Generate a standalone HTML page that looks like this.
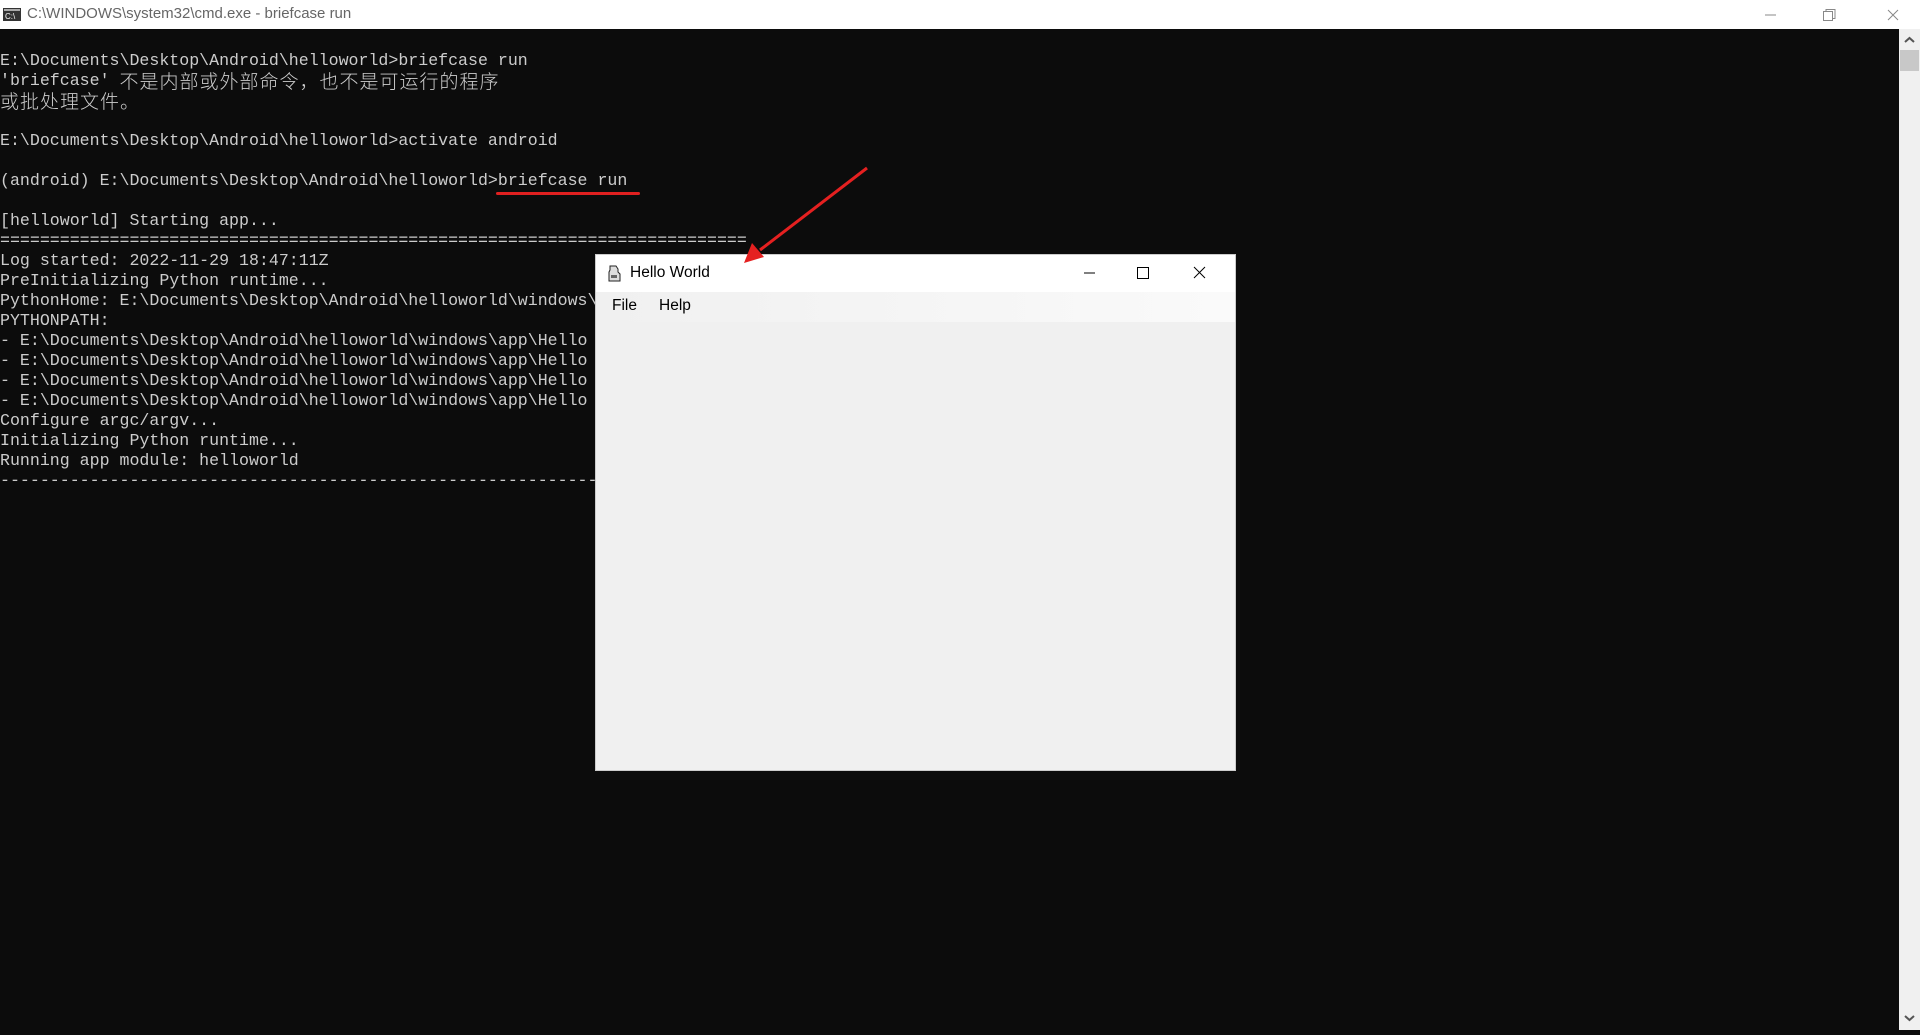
<!DOCTYPE html>
<html><head><meta charset="utf-8"><style>
*{margin:0;padding:0;box-sizing:border-box}
body{width:1920px;height:1030px;background:#0c0c0c;position:relative;overflow:hidden;font-family:"Liberation Sans",sans-serif}
#tb{position:absolute;left:0;top:0;width:1920px;height:29px;background:#fff}
#tb .t{position:absolute;left:27px;top:5px;font-size:15px;color:#666}
#term{position:absolute;left:0;top:51px;font-family:"Liberation Mono","Noto Sans CJK SC",monospace;font-size:16.6px;color:#cccccc}
#term div{height:20px;line-height:20px;overflow:visible;white-space:pre}
.c{font-family:"Noto Sans CJK SC",sans-serif;font-size:19px;letter-spacing:1px;line-height:20px;vertical-align:top;font-weight:300}
#sb{position:absolute;left:1899px;top:29px;width:21px;height:1001px;background:#f0f0f0}
#win{position:absolute;left:595px;top:254px;width:641px;height:517px;background:#f0f0f0;border:1px solid #ccc}
#wt{height:37px;background:#fff;position:relative}
#wt .t{position:absolute;left:34px;top:9px;font-size:15.5px;color:#000}
#mb{height:30px;background:linear-gradient(90deg,#f0f0f0,#fafafa);position:relative;font-size:15.5px;color:#000}
</style></head><body>
<div id="tb"><svg style="position:absolute;left:3px;top:8px" width="18" height="13"><rect width="18" height="13" fill="#333"/><rect x="1" y="1" width="16" height="2" fill="#aaa"/><text x="2" y="11" font-size="8" fill="#fff" font-family="Liberation Sans">C:\</text></svg><span class="t">C:\WINDOWS\system32\cmd.exe - briefcase  run</span>
<svg style="position:absolute;left:1765px;top:8px" width="150" height="14" stroke="#888" fill="none"><line x1="0" y1="7" x2="11" y2="7"/><rect x="58.5" y="3.5" width="9" height="9"/><path d="M61 3.5V1.5h9v9h-2"/><path d="M123 2l10 10M133 2l-10 10"/></svg></div>
<div id="term"><div>E:\Documents\Desktop\Android\helloworld>briefcase run</div><div>'briefcase' <span class="c">不是内部或外部命令，也不是可运行的程序</span></div><div><span class="c">或批处理文件。</span></div><div></div><div>E:\Documents\Desktop\Android\helloworld>activate android</div><div></div><div>(android) E:\Documents\Desktop\Android\helloworld>briefcase run</div><div></div><div>[helloworld] Starting app...</div><div>===========================================================================</div><div>Log started: 2022-11-29 18:47:11Z</div><div>PreInitializing Python runtime...</div><div>PythonHome: E:\Documents\Desktop\Android\helloworld\windows\app\Hello World</div><div>PYTHONPATH:</div><div>- E:\Documents\Desktop\Android\helloworld\windows\app\Hello World\python38.zip</div><div>- E:\Documents\Desktop\Android\helloworld\windows\app\Hello World\src\python</div><div>- E:\Documents\Desktop\Android\helloworld\windows\app\Hello World\src\app_packages</div><div>- E:\Documents\Desktop\Android\helloworld\windows\app\Hello World\src\app</div><div>Configure argc/argv...</div><div>Initializing Python runtime...</div><div>Running app module: helloworld</div><div>---------------------------------------------------------------------------</div></div>
<div style="position:absolute;left:496px;top:192px;width:144px;height:3px;background:#e02020;border-radius:2px"></div>
<div id="sb"><svg width="21" height="1001"><path d="M6 13l4.5-4 4.5 4" stroke="#555" stroke-width="2" fill="none"/><rect x="1" y="21" width="19" height="21" fill="#c8c8c8"/><path d="M6 987l4.5 4 4.5-4" stroke="#555" stroke-width="2" fill="none"/></svg></div>
<div id="win">
<div id="wt"><svg style="position:absolute;left:10px;top:9px" width="16" height="19"><path d="M4 2h6l2 3v3l2 2v7H3V8l1-2z" fill="#ddd" stroke="#222"/><path d="M5 11h6v3H5z" fill="#666"/></svg><span class="t">Hello World</span>
<svg style="position:absolute;left:480px;top:8px" width="160" height="20" stroke="#000" fill="none"><line x1="8" y1="10" x2="19" y2="10"/><rect x="61.5" y="4.5" width="11" height="11"/><path d="M118 4l11 11M129 4l-11 11"/></svg></div>
<div id="mb"><span style="position:absolute;left:16px;top:5px">File</span><span style="position:absolute;left:63px;top:5px">Help</span></div>
</div>
<svg style="position:absolute;left:0;top:0" width="1920" height="1030"><line x1="867" y1="168" x2="760" y2="250" stroke="#e52020" stroke-width="3"/><path d="M744 263l8-20 12 14z" fill="#e52020"/></svg>
</body></html>
